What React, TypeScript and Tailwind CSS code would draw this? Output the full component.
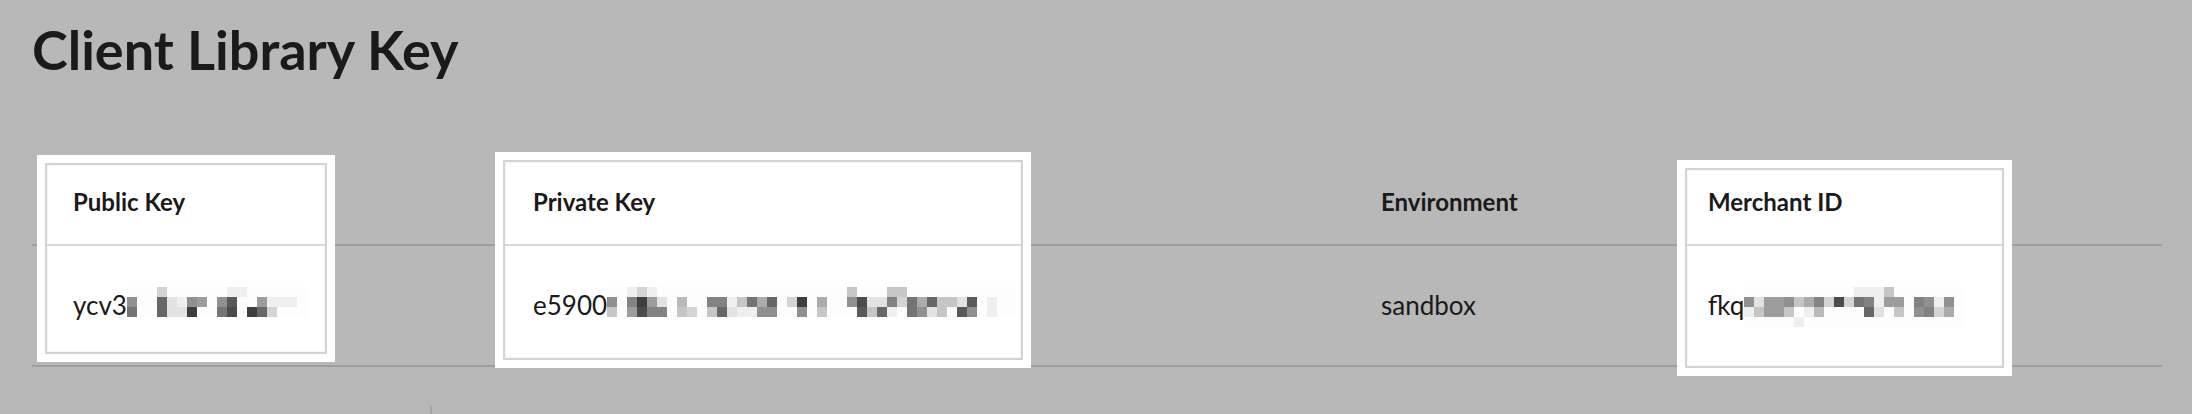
import React from 'react';

interface Box {
  pos: string;
  divider: string;
}

interface Column {
  label: string;
  prefix: string;
  mosaic?: string[];
  mosaicClass?: string;
  box?: Box;
}

// pixelated (blurred) key remainder, one hex char per 10px block
const Mosaic = ({ rows, className }: { rows: string[]; className?: string }) => {
  const cols = Math.max(...rows.map((r) => r.length));
  return (
    <svg width={cols * 10} height={rows.length * 10} className={className} shapeRendering="crispEdges">
      {rows.map((row, y) =>
        row.split('').map((c, x) => {
          const v = Math.round(0x30 + (parseInt(c, 16) * (0xfd - 0x30)) / 15);
          return <rect key={`${x}-${y}`} x={x * 10} y={y * 10} width={10} height={10} fill={`rgb(${v},${v},${v})`} />;
        })
      )}
    </svg>
  );
};

const columns: Column[] = [
  {
    label: 'Public Key',
    prefix: 'ycv3',
    mosaic: ['fffcffffffeeffffff', '7ff4de78f73ff8eeef', '5ff4dd1ff52f14cfff'],
    mosaicClass: 'mb-[7px]',
    box: { pos: 'left-[5px] -top-[5px] w-[298px] h-[207px]', divider: 'top-[79px]' },
  },
  {
    label: 'Private Key',
    prefix: 'e5900',
    mosaic: [
      'ffecefffffffffffffffffffbfffbbfffffffffff',
      '7f618dfaff66eb594fc1f9ff72dd6c594bbd3feff',
      'bf8266fbcfb4dee77ff7fbfff3b4ef57dbf37feff',
    ],
    mosaicClass: 'mb-[7px]',
    box: { pos: 'left-[3px] -top-[8px] w-[536px] h-[216px]', divider: 'top-[82px]' },
  },
  { label: 'Environment', prefix: 'sandbox' },
  {
    label: 'Merchant ID',
    prefix: 'fkq',
    mosaic: ['fffffffffffeeebfffffff', '7d887b96c2c56e88f67e7f', 'eb88bfeaffff4dfbf76c9f', 'fffffeffffffffffffffff'],
    mosaicClass: 'mt-[3px]',
    box: { pos: 'left-[10px] top-0 w-[335px] h-[216px]', divider: 'top-[74px]' },
  },
];

const KeyColumn = ({ col }: { col: Column }) => (
  <div className="relative">
    {col.box && (
      <div className={`absolute bg-white p-2 ${col.box.pos}`}>
        <div className="relative h-full border-2 border-[#d3d3d3] shadow-[inset_0_0_2px_rgba(0,0,0,0.12)]">
          <div className={`absolute left-0 right-0 h-[2px] bg-[#d9d9d9] ${col.box.divider}`} />
        </div>
      </div>
    )}
    <div className="relative flex h-[84px] items-center pl-[41px] text-[24px] font-bold">{col.label}</div>
    <div className="h-[2px] bg-[#9e9e9e]" />
    <div className="relative flex h-[119px] items-center pl-[41px] text-[26px]">
      <span>{col.prefix}</span>
      {col.mosaic && <Mosaic rows={col.mosaic} className={col.mosaicClass} />}
    </div>
    <div className="h-[2px] bg-[#9e9e9e]" />
  </div>
);

export default function App() {
  return (
    <div className="h-[414px] overflow-hidden bg-[#b8b8b8] font-['Lato',sans-serif] text-[#1a1a1a]">
      <h1 className="pl-[32px] pt-[23px] text-[54px] font-bold leading-none">Client Library Key</h1>
      <div className="mx-[32px] mt-[83px] grid grid-cols-[460px_848px_327px_495px]">
        {columns.map((col) => (
          <KeyColumn key={col.label} col={col} />
        ))}
      </div>
      <div className="ml-[430px] mt-[39px] h-[8px] w-[2px] bg-[#a4a4a4]" />
    </div>
  );
}
